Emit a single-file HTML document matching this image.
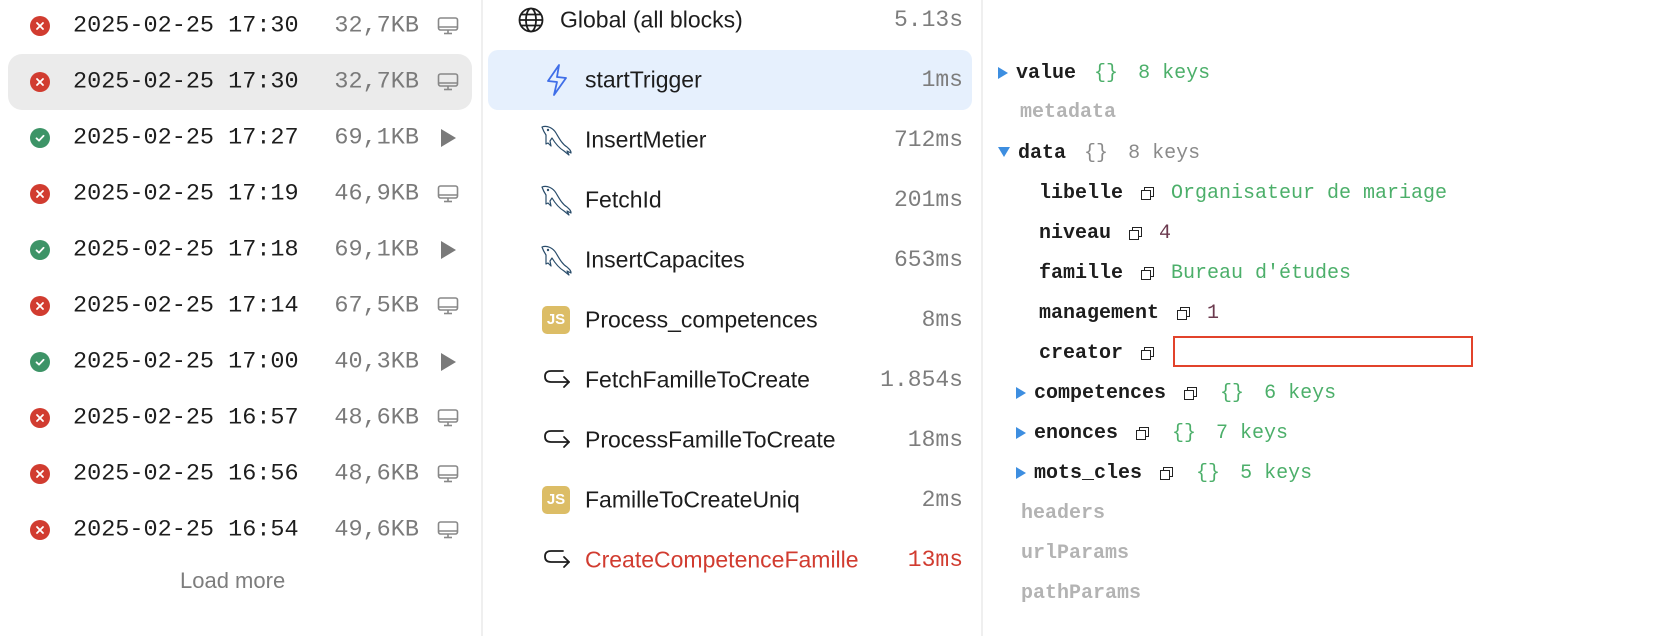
<!DOCTYPE html>
<html><head><meta charset="utf-8"><style>
*{margin:0;padding:0;box-sizing:border-box}
body{width:1680px;height:636px;background:#fff;position:relative;overflow:hidden;font-family:"Liberation Sans",sans-serif}
.a{position:absolute;white-space:nowrap}
.lrow{position:absolute;left:0;width:480px;height:56px}
.date{position:absolute;left:73px;top:50%;transform:translateY(-50%);font:23.5px "Liberation Mono",monospace;color:#1d1d1d}
.size{position:absolute;right:61px;top:50%;transform:translateY(-50%);font:23.5px "Liberation Mono",monospace;color:#7a7a7a}
.st{position:absolute;left:30px;top:50%;margin-top:-10px;width:20px;height:20px;border-radius:50%}
.ic{position:absolute;left:437px;top:50%;margin-top:-10px}
.mrow{position:absolute;left:488px;width:484px;height:60px}
.mname{position:absolute;left:97px;top:50%;transform:translateY(-50%);font-size:23px;color:#1d1d1d}
.mt{position:absolute;right:9px;top:50%;transform:translateY(-50%);font:23px "Liberation Mono",monospace;color:#7d7d7d}
.mic{position:absolute;left:52px;top:50%;margin-top:-16px}
.js{position:absolute;left:54px;top:50%;margin-top:-14px;width:28px;height:28px;border-radius:5px;background:#dcbd66;color:#fff;font:bold 15px "Liberation Sans",sans-serif;text-align:center;line-height:28px}
.r{position:absolute;font:20px "Liberation Mono",monospace;height:40px;line-height:40px;white-space:nowrap}
.k{font-weight:bold;color:#1d1d1d}
.g{color:#4caf6a}
.gr{color:#8a8a8a}
.dim{font-weight:bold;color:#b3b3b3}
.tri{display:inline-block;width:0;height:0;border-top:6px solid transparent;border-bottom:6px solid transparent;border-left:10px solid #3d8ee0;margin-right:8px;vertical-align:-1px}
.trid{display:inline-block;width:0;height:0;border-left:6px solid transparent;border-right:6px solid transparent;border-top:10px solid #3d8ee0;margin-right:8px;vertical-align:1px}
.cp{display:inline-block;width:12px;height:12px;position:relative;margin:0 18px 0 18px;vertical-align:-1px}
.cp:before{content:"";position:absolute;left:0;top:3px;width:8px;height:8px;border:1.5px solid #222;background:#fff;z-index:1}
.cp:after{content:"";position:absolute;left:3px;top:0;width:8px;height:8px;border:1.5px solid #222}
</style></head><body>
<div class="a" style="left:481px;top:0;width:2px;height:636px;background:#efefef"></div>
<div class="a" style="left:981px;top:0;width:2px;height:636px;background:#efefef"></div>
<div class="a" style="left:8px;top:54px;width:464px;height:56px;border-radius:14px;background:#ebebeb"></div>
<div class="a" style="left:488px;top:50px;width:484px;height:60px;border-radius:10px;background:#e6f0fd"></div>

<div id="L"></div>
<script>
var rows=[["x","17:30","32,7KB"],["x","17:30","32,7KB"],["o","17:27","69,1KB"],["x","17:19","46,9KB"],["o","17:18","69,1KB"],["x","17:14","67,5KB"],["o","17:00","40,3KB"],["x","16:57","48,6KB"],["x","16:56","48,6KB"],["x","16:54","49,6KB"]];
var h="";
var mon='<svg class="ic" width="22" height="20" viewBox="0 0 22 20"><rect x="1.5" y="2" width="19" height="12" rx="2" fill="none" stroke="#888" stroke-width="1.6"/><line x1="1.5" y1="11" x2="20.5" y2="11" stroke="#888" stroke-width="1.6"/><line x1="11" y1="14" x2="11" y2="17" stroke="#888" stroke-width="1.6"/><line x1="7" y1="17.5" x2="15" y2="17.5" stroke="#888" stroke-width="1.6"/></svg>';
var play='<svg class="ic" width="22" height="20" viewBox="0 0 22 20"><path d="M4 1 L19 10 L4 19Z" fill="#7a7a7a"/></svg>';
rows.forEach(function(r,i){
 var y=26+56*i-28;
 var st=r[0]=="x"?'<div class="st" style="background:#d13c30"><svg width="20" height="20" viewBox="0 0 20 20"><path d="M7 7L13 13M13 7L7 13" stroke="#fff" stroke-width="1.8" stroke-linecap="round"/></svg></div>':'<div class="st" style="background:#3d9467"><svg width="20" height="20" viewBox="0 0 20 20"><path d="M6.5 10.3L9 12.6L13.6 7.8" stroke="#fff" stroke-width="1.8" fill="none" stroke-linecap="round" stroke-linejoin="round"/></svg></div>';
 h+='<div class="lrow" style="top:'+y+'px">'+st+'<span class="date">2025-02-25 '+r[1]+'</span><span class="size">'+r[2]+'</span>'+(r[0]=="x"?mon:play)+'</div>';
});
document.getElementById("L").outerHTML=h;
</script>
<div class="a" style="left:180px;top:568px;font-size:22px;color:#7d7d7d">Load more</div>

<div class="mrow" style="top:-10px"><svg class="mic" style="left:30px;margin-top:-13px" width="26" height="26" viewBox="0 0 26 26" fill="none" stroke="#1d1d1d" stroke-width="1.8"><circle cx="13" cy="13" r="11.5"/><ellipse cx="13" cy="13" rx="5" ry="11.5"/><line x1="1.5" y1="13" x2="24.5" y2="13"/><line x1="3" y1="7.5" x2="23" y2="7.5"/><line x1="3" y1="18.5" x2="23" y2="18.5"/></svg><span class="mname" style="left:72px">Global (all blocks)</span><span class="mt">5.13s</span></div>
<div class="mrow" style="top:50px"><svg class="mic" style="left:57px" width="24" height="32" viewBox="0 0 24 32" fill="none" stroke="#3f6ee8" stroke-width="1.8" stroke-linejoin="round"><path d="M14 1 L3 17 L12 18 L9 31 L21 14 L12 13 Z"/></svg><span class="mname">startTrigger</span><span class="mt">1ms</span></div>
<script>
var dol='<svg class="mic" width="34" height="32" viewBox="0 0 34 32" fill="none" stroke="#2a4d6b" stroke-width="1.2" stroke-linejoin="round"><path d="M2 3 C7 1 13 4 16 9 C19 14 22 20 27 23 C29 25 31 26 31 29 L27 27 L29 31 L24 27 C19 24 15 19 12 14 L10 17 L11 22 L8 19 L6 20 L6 11 C4 8 3 6 2 3Z"/><circle cx="8" cy="6" r="0.6" fill="#2a4d6b"/></svg>';
var red='<svg class="mic" style="margin-top:-13px;left:55px" width="30" height="26" viewBox="0 0 30 26" fill="none" stroke="#1d1d1d" stroke-width="1.8" stroke-linecap="round" stroke-linejoin="round"><path d="M20 4 H8 C4 4 2 6 2 9.5 C2 13 4 15 8 15 H26"/><path d="M21 10 L26 15 L21 20"/></svg>';
var js='<div class="js">JS</div>';
var m=[[dol,"InsertMetier","712ms"],[dol,"FetchId","201ms"],[dol,"InsertCapacites","653ms"],[js,"Process_competences","8ms"],[red,"FetchFamilleToCreate","1.854s"],[red,"ProcessFamilleToCreate","18ms"],[js,"FamilleToCreateUniq","2ms"],[red,"CreateCompetenceFamille","13ms",1]];
var s="";
m.forEach(function(r,i){var c=r[3]?' style="color:#d13c30"':'';
s+='<div class="mrow" style="top:'+(110+60*i)+'px">'+r[0]+'<span class="mname"'+c+'>'+r[1]+'</span><span class="mt"'+c+'>'+r[2]+'</span></div>';});
document.write(s);
</script>

<div class="r" style="left:998px;top:54px"><span class="tri"></span><span class="k">value</span> <span class="g" style="margin-left:6px">{}</span> <span class="g" style="margin-left:8px">8 keys</span></div>
<div class="r dim" style="left:1020px;top:93px">metadata</div>
<div class="r" style="left:998px;top:134px"><span class="trid"></span><span class="k">data</span> <span class="gr" style="margin-left:6px">{}</span> <span class="gr" style="margin-left:8px">8 keys</span></div>
<div class="r" style="left:1039px;top:174px"><span class="k">libelle</span><span class="cp"></span><span class="g">Organisateur de mariage</span></div>
<div class="r" style="left:1039px;top:214px"><span class="k">niveau</span><span class="cp"></span><span style="color:#6b3a4e">4</span></div>
<div class="r" style="left:1039px;top:254px"><span class="k">famille</span><span class="cp"></span><span class="g">Bureau d'études</span></div>
<div class="r" style="left:1039px;top:294px"><span class="k">management</span><span class="cp"></span><span style="color:#6b3a4e">1</span></div>
<div class="r" style="left:1039px;top:334px"><span class="k">creator</span><span class="cp"></span></div>
<div class="a" style="left:1173px;top:336px;width:300px;height:31px;border:2px solid #e2432b"></div>
<div class="r" style="left:1016px;top:374px"><span class="tri"></span><span class="k">competences</span><span class="cp"></span><span class="g" style="margin-left:6px">{}</span> <span class="g" style="margin-left:8px">6 keys</span></div>
<div class="r" style="left:1016px;top:414px"><span class="tri"></span><span class="k">enonces</span><span class="cp"></span><span class="g" style="margin-left:6px">{}</span> <span class="g" style="margin-left:8px">7 keys</span></div>
<div class="r" style="left:1016px;top:454px"><span class="tri"></span><span class="k">mots_cles</span><span class="cp"></span><span class="g" style="margin-left:6px">{}</span> <span class="g" style="margin-left:8px">5 keys</span></div>
<div class="r dim" style="left:1021px;top:494px">headers</div>
<div class="r dim" style="left:1021px;top:534px">urlParams</div>
<div class="r dim" style="left:1021px;top:574px">pathParams</div>
</body></html>
